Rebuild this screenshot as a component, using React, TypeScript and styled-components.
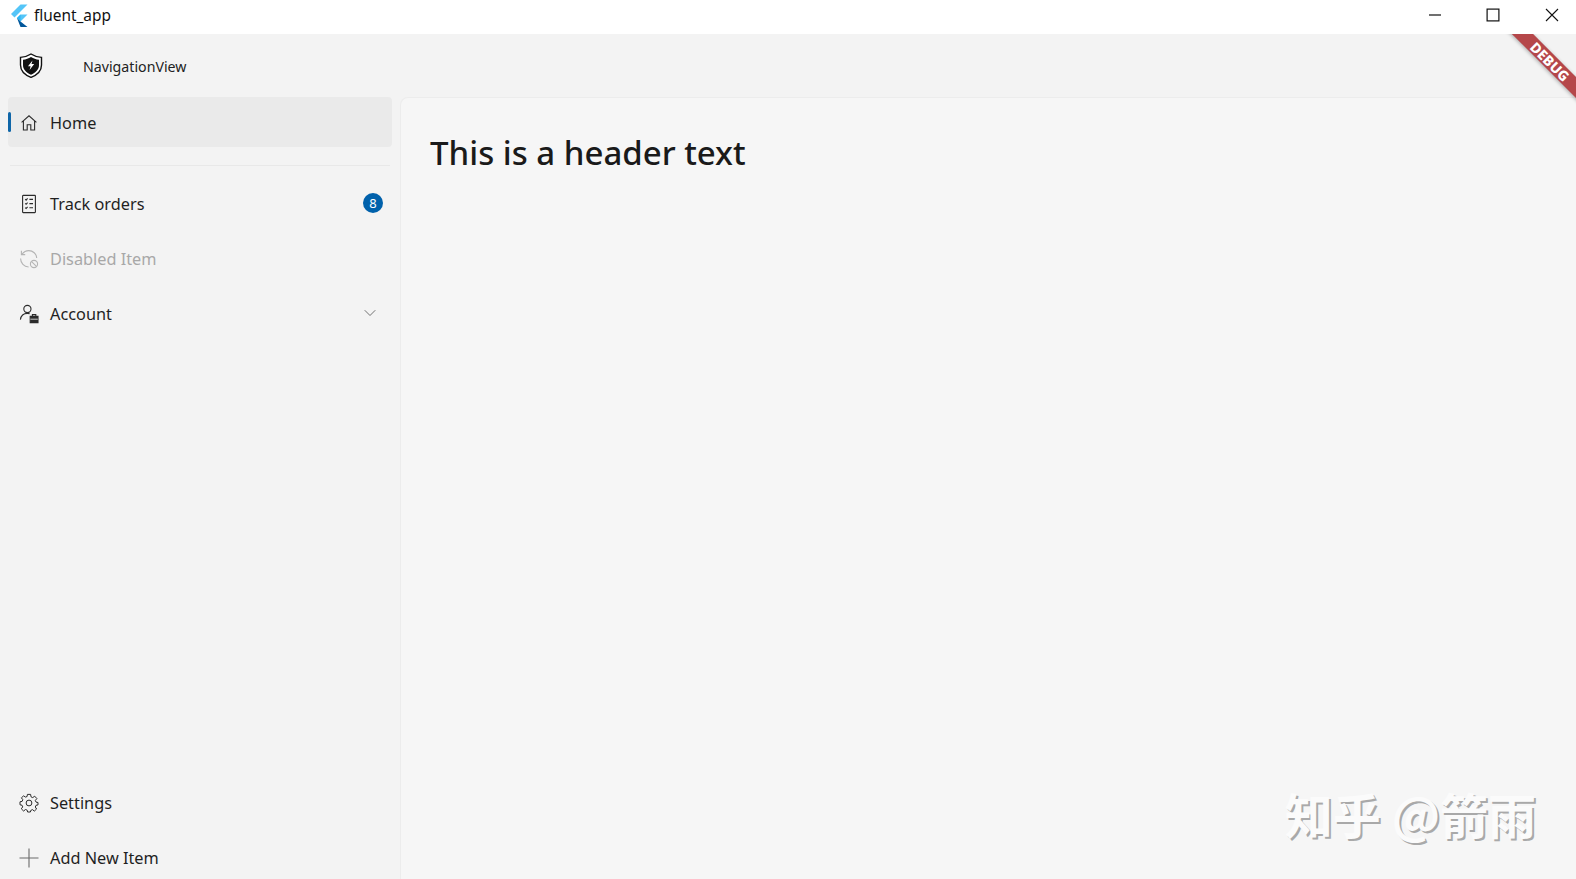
import React from "react";
import styled, { createGlobalStyle } from "styled-components";
import { ChevronDown } from "lucide-react";

const GlobalStyle = createGlobalStyle`
  html, body {
    margin: 0;
    padding: 0;
    height: 100%;
    overflow: hidden;
    background: #f3f3f3;
    font-family: "Noto Sans", "Open Sans", "Liberation Sans", sans-serif;
    color: #1b1b1b;
  }
`;

function FlutterLogo() {
  return (
    <svg width="19" height="23" viewBox="0 0 19 23">
      <path d="M11.5 0.5H18.5L5.5 13.5L2 10Z" fill="#54c5f8" />
      <path d="M11.5 10.5H18.5L11.5 17.5L8 14Z" fill="#54c5f8" />
      <path d="M8 14L11.5 10.5L11.5 17.5Z" fill="#29b6f6" />
      <path d="M8 14L11.5 17.5L18.5 23H11.5Z" fill="#01579b" />
    </svg>
  );
}

function ShieldLogo() {
  return (
    <svg width="24" height="25" viewBox="0 0 24 25">
      <path d="M12 1C15 3 18 4 22.5 4.4V12C22.5 18 18 22 12 24.4C6 22 1.5 18 1.5 12V4.4C6 4 9 3 12 1Z" fill="#fff" stroke="#111" strokeWidth="1.4" />
      <path d="M12 4C14.5 5.6 17 6.4 20 6.8V12C20 16.6 16.6 19.8 12 21.8C7.4 19.8 4 16.6 4 12V6.8C7 6.4 9.5 5.6 12 4Z" fill="#111" />
      <path d="M13.5 7.5L9 13.2H11.6L10.6 17L15.2 11H12.5Z" fill="#fff" />
    </svg>
  );
}

function HomeIcon() {
  return (
    <svg width="18" height="18" viewBox="0 0 18 18" fill="none" stroke="#2b2b2b" strokeWidth="1.1">
      <path d="M1.6 8.4L9 1.8L16.4 8.4" />
      <path d="M3.4 7V16H7.2V10.8H10.8V16H14.6V7" />
    </svg>
  );
}

function OrdersIcon() {
  return (
    <svg width="18" height="20" viewBox="0 0 18 20" fill="none" stroke="#2b2b2b" strokeWidth="1.1">
      <rect x="2.6" y="1.4" width="12.8" height="17.2" rx="0.6" />
      <path d="M5.2 5.2L6.1 6.1L7.6 4.4M5.2 9.4L6.1 10.3L7.6 8.6M5.2 13.6L6.1 14.5L7.6 12.8" />
      <path d="M9.4 5.4H13M9.4 9.6H13M9.4 13.8H13" />
    </svg>
  );
}

function DisabledIcon() {
  return (
    <svg width="20" height="20" viewBox="0 0 20 20" fill="none" stroke="#b4b4b4" strokeWidth="1.1">
      <path d="M3 5.2C4.6 2.9 7 1.6 9.8 1.6C14 1.6 17.4 4.8 17.7 9" />
      <path d="M2.4 1.8V5.6H6.2" />
      <path d="M1.6 9.6C1.6 14.2 5 17.8 9.6 18" />
      <circle cx="15" cy="15" r="3.6" />
      <path d="M12.6 12.6L17.4 17.4" />
    </svg>
  );
}

function AccountIcon() {
  return (
    <svg width="20" height="20" viewBox="0 0 20 20" fill="none" stroke="#2b2b2b" strokeWidth="1.1">
      <circle cx="8.4" cy="5" r="3.6" />
      <path d="M1.4 15.6C2 11.6 4.6 9.4 8.4 9.4C9.2 9.4 10 9.5 10.7 9.7" />
      <path d="M11.2 12.4H19V18.6H11.2Z" fill="#2b2b2b" />
      <path d="M13.4 12.2V10.6H16.8V12.2" />
      <path d="M11.4 15.2H18.8" stroke="#f3f3f3" strokeWidth="0.8" />
    </svg>
  );
}

function GearIcon() {
  return (
    <svg width="20" height="20" viewBox="0 0 20 20" fill="none" stroke="#2b2b2b" strokeWidth="1">
      <circle cx="10" cy="10" r="2.9" />
      <path d="M8.4 1.4H11.6L12 3.8L13.7 4.6L15.7 3.2L17.9 5.6L16.3 7.4L17 9.1L19 9.5V11.9L17 12.3L16.3 14L17.6 16L15.3 18.1L13.5 16.6L11.8 17.4L11.4 19H8.6L8.2 17.2L6.5 16.5L4.6 18L2.3 15.8L3.7 13.9L3 12.2L1 11.8V8.8L3.1 8.4L3.8 6.7L2.4 4.8L4.6 2.9L6.6 4.1L8.1 3.5Z" />
    </svg>
  );
}

function PlusIcon() {
  return (
    <svg width="20" height="20" viewBox="0 0 20 20" fill="none" stroke="#6a6a6a" strokeWidth="1.1">
      <path d="M10 0.5V19.5M0.5 10H19.5" />
    </svg>
  );
}

function MinimizeIcon() {
  return (
    <svg width="14" height="14" viewBox="0 0 14 14" fill="none" stroke="#111" strokeWidth="1.2">
      <path d="M1 7H13" />
    </svg>
  );
}

function MaximizeIcon() {
  return (
    <svg width="14" height="14" viewBox="0 0 14 14" fill="none" stroke="#111" strokeWidth="1.2">
      <rect x="1.1" y="1.1" width="11.8" height="11.8" />
    </svg>
  );
}

function CloseIcon() {
  return (
    <svg width="14" height="14" viewBox="0 0 14 14" fill="none" stroke="#111" strokeWidth="1.1">
      <path d="M1 1L13 13M13 1L1 13" />
    </svg>
  );
}

const navTop = [
  { key: "orders", label: "Track orders", icon: <OrdersIcon />, badge: "8" },
  { key: "disabled", label: "Disabled Item", icon: <DisabledIcon />, disabled: true },
  { key: "account", label: "Account", icon: <AccountIcon />, expandable: true },
];

export default function App() {
  return (
    <Page>
      <GlobalStyle />
      <TitleBar>
        <AppTitle>
          <FlutterLogo />
          <AppName>fluent_app</AppName>
        </AppTitle>
        <WindowControls>
          <WindowButton><MinimizeIcon /></WindowButton>
          <WindowButton><MaximizeIcon /></WindowButton>
          <WindowButton><CloseIcon /></WindowButton>
        </WindowControls>
      </TitleBar>
      <Shell>
        <Sidebar>
          <SidebarHeader>
            <ShieldLogo />
            <SidebarTitle>NavigationView</SidebarTitle>
          </SidebarHeader>
          <NavItem $active>
            <ActiveMark />
            <IconSlot><HomeIcon /></IconSlot>
            <NavLabel>Home</NavLabel>
          </NavItem>
          <NavDivider />
          {navTop.map((item) => (
            <NavItem key={item.key}>
              <IconSlot>{item.icon}</IconSlot>
              <NavLabel $disabled={item.disabled}>{item.label}</NavLabel>
              {item.badge && <Badge>{item.badge}</Badge>}
              {item.expandable && (
                <Chevron><ChevronDown size={20} strokeWidth={0.9} color="#444" /></Chevron>
              )}
            </NavItem>
          ))}
          <SidebarFooter>
            <NavItem>
              <IconSlot><GearIcon /></IconSlot>
              <NavLabel>Settings</NavLabel>
            </NavItem>
            <NavItem>
              <IconSlot><PlusIcon /></IconSlot>
              <NavLabel>Add New Item</NavLabel>
            </NavItem>
          </SidebarFooter>
        </Sidebar>
        <ContentColumn>
          <ContentPanel>
            <Heading>This is a header text</Heading>
          </ContentPanel>
        </ContentColumn>
        <DebugBanner><span>DEBUG</span></DebugBanner>
        <Watermark>知乎 @箭雨</Watermark>
      </Shell>
    </Page>
  );
}

const Page = styled.div`
  width: 1576px;
  height: 879px;
  display: flex;
  flex-direction: column;
  overflow: hidden;
`;

const TitleBar = styled.header`
  height: 34px;
  flex: none;
  background: #fff;
  display: flex;
  align-items: center;
  justify-content: space-between;
`;

const AppTitle = styled.div`
  display: flex;
  align-items: center;
  gap: 6px;
  padding: 0 0 4px 9px;
`;

const AppName = styled.span`
  font-size: 15.4px;
  color: #111;
`;

const WindowControls = styled.div`
  display: flex;
  height: 100%;
  margin-right: -5px;
`;

const WindowButton = styled.div`
  width: 58.5px;
  display: flex;
  align-items: center;
  justify-content: center;
  padding-bottom: 4px;
  box-sizing: border-box;
`;

const Shell = styled.div`
  flex: 1;
  display: flex;
  position: relative;
  overflow: hidden;
  background: #f3f3f3;
`;

const Sidebar = styled.nav`
  width: 400px;
  flex: none;
  display: flex;
  flex-direction: column;
  box-sizing: border-box;
  padding: 0 8px 0;
`;

const SidebarHeader = styled.div`
  height: 63px;
  flex: none;
  display: flex;
  align-items: center;
  padding-left: 11px;
  gap: 40px;
`;

const SidebarTitle = styled.span`
  font-size: 14.2px;
  color: #222;
  padding-top: 2px;
`;

const NavItem = styled.div<{ $active?: boolean }>`
  position: relative;
  height: ${(p) => (p.$active ? "50px" : "55px")};
  flex: none;
  display: flex;
  align-items: center;
  box-sizing: border-box;
  padding: ${(p) => (p.$active ? "1px 11px 0" : "0 11px")};
  border-radius: 4px;
  background: ${(p) => (p.$active ? "#eaeaea" : "transparent")};
`;

const ActiveMark = styled.div`
  position: absolute;
  left: 0;
  top: 15px;
  width: 3px;
  height: 20px;
  border-radius: 2px;
  background: #0f66a8;
`;

const IconSlot = styled.div`
  width: 20px;
  height: 24px;
  flex: none;
  display: flex;
  align-items: center;
  justify-content: center;
  margin-right: 11px;
`;

const NavLabel = styled.span<{ $disabled?: boolean }>`
  font-size: 16.3px;
  color: ${(p) => (p.$disabled ? "#a8a8a8" : "#1f1f1f")};
`;

const Badge = styled.span`
  margin-left: auto;
  margin-right: -2px;
  margin-top: -2px;
  width: 20px;
  height: 20px;
  border-radius: 50%;
  background: #0061ab;
  color: #fff;
  font-size: 13px;
  display: flex;
  align-items: center;
  justify-content: center;
`;

const Chevron = styled.span`
  margin-left: auto;
  margin-right: 1px;
  margin-top: -2px;
  display: flex;
`;

const NavDivider = styled.div`
  height: 1px;
  flex: none;
  margin: 18px 2px 10px;
  background: #e8e8e8;
`;

const SidebarFooter = styled.div`
  margin-top: auto;
  margin-bottom: -6px;
  display: flex;
  flex-direction: column;
`;

const ContentColumn = styled.main`
  flex: 1;
  padding-top: 63px;
  display: flex;
`;

const ContentPanel = styled.section`
  flex: 1;
  background: #f6f6f6;
  border-top: 1px solid #ececec;
  border-left: 1px solid #ececec;
  border-top-left-radius: 8px;
  padding: 31px 29px;
`;

const Heading = styled.h1`
  margin: 0;
  font-size: 33px;
  font-weight: 500;
  line-height: 48px;
  color: #1a1a1a;
`;

const DebugBanner = styled.div`
  position: absolute;
  top: 20px;
  right: -44px;
  width: 140px;
  height: 15px;
  background: #b5474a;
  transform: rotate(45deg);
  box-shadow: 0 1px 4px rgba(0, 0, 0, 0.3);
  display: flex;
  align-items: center;
  justify-content: center;

  span {
    color: #fff;
    font-size: 14px;
    font-weight: 800;
    line-height: 15px;
    font-family: "Noto Sans", sans-serif;
  }
`;

const Watermark = styled.div`
  position: absolute;
  right: 40px;
  bottom: 38px;
  font-family: "Noto Sans CJK SC", sans-serif;
  font-size: 48px;
  font-weight: 700;
  line-height: 56px;
  white-space: nowrap;
  color: #fbfbfb;
  text-shadow: 2px 2px 0 #a9a9a9;
`;
